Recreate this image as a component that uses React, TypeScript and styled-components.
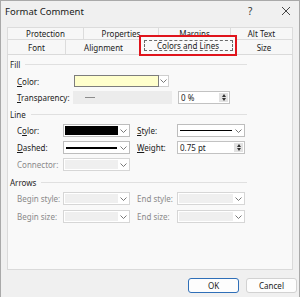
import { FC, ReactNode } from 'react';
import styled, { createGlobalStyle } from 'styled-components';

const GlobalStyle = createGlobalStyle`
  html, body { margin: 0; padding: 0; background: #ffffff; }
  body { font-family: "Noto Sans", "DejaVu Sans", sans-serif; }
`;

const Window = styled.div`
  width: 300px;
  height: 297px;
  box-sizing: border-box;
  background: #f0f0f0;
  border: 1px solid #a9a9a9;
  border-bottom: none;
  display: flex;
  flex-direction: column;
  font-size: 8px;
  color: #1b1b1b;
  overflow: hidden;
`;

const TitleBar = styled.div`
  height: 20px;
  display: flex;
  align-items: center;
  padding-left: 4px;
  font-size: 9.5px;
  color: #1a1a1a;
`;

const Title = styled.span`
  flex: 1;
`;

const Help = styled.span`
  width: 10px;
  margin-right: 23px;
  font-size: 10px;
  color: #333;
`;

const Close = styled.span`
  width: 10px;
  height: 10px;
  margin-right: 8px;
  display: flex;
`;

const Tabs = styled.div`
  margin: 6px 6px 0 6px;
  display: flex;
  flex-direction: column;
`;

const TabRow = styled.div<{ $h: number }>`
  display: flex;
  height: ${p => p.$h}px;
  align-items: stretch;
`;

const Tab = styled.div<{ $w: number }>`
  width: ${p => p.$w}px;
  box-sizing: border-box;
  display: flex;
  align-items: center;
  justify-content: center;
  white-space: nowrap;
  background: #f7f7f7;
  border-top: 1px solid #dcdcdc;
  border-left: 1px solid #dcdcdc;
  &:last-child { border-right: 1px solid #dcdcdc; }
`;

const ActiveTab = styled(Tab)`
  background: #fafafa;
  margin-top: -2px;
  height: 17px;
  position: relative;
  z-index: 1;
  outline: 2px solid #e0141c;
  outline-offset: 0;
  border: none;
`;

const FocusRing = styled.span`
  width: 89px;
  height: 11px;
  box-sizing: border-box;
  border: 1px dashed #6a6a6a;
  display: flex;
  align-items: center;
  justify-content: center;
  white-space: nowrap;
`;

const Panel = styled.div`
  margin: 0 6px;
  height: 216px;
  box-sizing: border-box;
  background: #f9f9f9;
  border: 1px solid #dadada;
  padding: 3px 2px 0 2px;
  display: flex;
  flex-direction: column;
`;

const Heading = styled.div<{ $top: number }>`
  width: 237px;
  height: 12px;
  margin-top: ${p => p.$top}px;
  display: flex;
  align-items: center;
  gap: 5px;
  color: #262626;
  &::after {
    content: '';
    flex: 1;
    border-top: 1px solid #e0e0e0;
  }
`;

const Row = styled.div<{ $top: number; $h: number }>`
  display: flex;
  align-items: center;
  margin-top: ${p => p.$top}px;
  padding-left: 7px;
  height: ${p => p.$h}px;
`;

const Label = styled.span<{ $w: number; $inset?: number; $disabled?: boolean }>`
  width: ${p => p.$w}px;
  padding-left: ${p => p.$inset ?? 0}px;
  box-sizing: content-box;
  flex: none;
  color: ${p => (p.$disabled ? '#8a8a8a' : '#1b1b1b')};
  white-space: nowrap;
`;

const Grid = styled.div<{ $top: number; $gap: number }>`
  display: grid;
  grid-template-columns: 46px 67px 47px 68px;
  grid-auto-rows: 13px;
  row-gap: ${p => p.$gap}px;
  align-items: center;
  margin-top: ${p => p.$top}px;
  padding-left: 7px;
`;

const ComboBox = styled.div<{ $w: number; $disabled?: boolean }>`
  width: ${p => p.$w}px;
  height: 100%;
  box-sizing: border-box;
  display: flex;
  background: #ffffff;
  border: 1px solid ${p => (p.$disabled ? '#d6d6d6' : '#bdbdbd')};
`;

const Preview = styled.div<{ $bg: string }>`
  flex: 1;
  margin: 1px 0 1px 1px;
  background: ${p => p.$bg};
  display: flex;
  align-items: center;
  padding: 0 1px;
`;

const Stroke = styled.div<{ $weight: number }>`
  flex: 1;
  border-top: ${p => p.$weight}px solid #000;
`;

const ArrowBox = styled.div`
  width: 11px;
  flex: none;
  display: flex;
  align-items: center;
  justify-content: center;
`;

const SplitCombo = styled.div<{ $w: number }>`
  width: ${p => p.$w}px;
  height: 100%;
  display: flex;
`;

const Swatch = styled.div<{ $bg: string }>`
  flex: 1;
  background: ${p => p.$bg};
  border: 1px solid #7d7d7d;
`;

const SplitArrow = styled.div`
  width: 10px;
  box-sizing: border-box;
  background: #fff;
  border: 1px solid #cfcfcf;
  border-left: none;
  display: flex;
  align-items: center;
  justify-content: center;
`;

const Slider = styled.div`
  width: 99px;
  height: 13px;
  background: #ececec;
  display: flex;
  align-items: center;
  padding-left: 12px;
  box-sizing: border-box;
  &::before {
    content: '';
    width: 10px;
    border-top: 1px solid #8c8c8c;
  }
`;

const TextBox = styled.div<{ $w: number; $left?: number }>`
  width: ${p => p.$w}px;
  height: 13px;
  margin-left: ${p => p.$left ?? 0}px;
  box-sizing: border-box;
  background: #fff;
  border: 1px solid #c2c2c2;
  display: flex;
  align-items: center;
  padding-left: 2px;
`;

const TextValue = styled.span`
  flex: 1;
`;

const Spin = styled.div`
  width: 9px;
  height: 9px;
  margin-right: 1px;
  background: #e2e2e2;
  display: flex;
  flex-direction: column;
  align-items: center;
  justify-content: space-around;
`;

const Footer = styled.div`
  display: flex;
  justify-content: flex-end;
  gap: 7px;
  padding: 8px 2px 0 0;
`;

const Button = styled.button<{ $primary?: boolean }>`
  width: 51px;
  height: 15px;
  padding: 0;
  font-family: inherit;
  font-size: 8px;
  color: #1b1b1b;
  background: #fdfdfd;
  border: 1px solid ${p => (p.$primary ? '#2f6fb8' : '#d2d2d2')};
  border-radius: 3px;
`;

const Chevron: FC = () => (
  <svg width="7" height="4" viewBox="0 0 7 4">
    <polyline points="0.5,0.5 3.5,3.5 6.5,0.5" fill="none" stroke="#6a6a6a" strokeWidth="0.9" />
  </svg>
);

const Tri: FC<{ up?: boolean }> = ({ up }) => (
  <svg width="4" height="3" viewBox="0 0 4 3">
    <polygon points={up ? '0,3 4,3 2,0' : '0,0 4,0 2,3'} fill="#333" />
  </svg>
);

const Combo: FC<{ w: number; bg?: string; disabled?: boolean; children?: ReactNode }> = ({
  w,
  bg,
  disabled,
  children,
}) => (
  <ComboBox $w={w} $disabled={disabled}>
    <Preview $bg={bg ?? (disabled ? '#efefef' : '#fff')}>{children}</Preview>
    <ArrowBox>
      <Chevron />
    </ArrowBox>
  </ComboBox>
);

const SpinBox: FC<{ w: number; value: string; left?: number }> = ({ w, value, left }) => (
  <TextBox $w={w} $left={left}>
    <TextValue>{value}</TextValue>
    <Spin>
      <Tri up />
      <Tri />
    </Spin>
  </TextBox>
);

const backTabs = [
  { label: 'Protection', w: 76 },
  { label: 'Properties', w: 75 },
  { label: 'Margins', w: 72 },
  { label: 'Alt Text', w: 63 },
];

const App: FC = () => (
  <>
    <GlobalStyle />
    <Window>
      <TitleBar>
        <Title>Format Comment</Title>
        <Help>?</Help>
        <Close>
          <svg width="10" height="10" viewBox="0 0 10 10">
            <path d="M1 1 L9 9 M9 1 L1 9" stroke="#333" strokeWidth="0.9" />
          </svg>
        </Close>
      </TitleBar>

      <Tabs>
        <TabRow $h={12}>
          {backTabs.map(t => (
            <Tab key={t.label} $w={t.w}>
              {t.label}
            </Tab>
          ))}
        </TabRow>
        <TabRow $h={15}>
          <Tab $w={58}>Font</Tab>
          <Tab $w={76}>Alignment</Tab>
          <ActiveTab $w={94}>
            <FocusRing>Colors and Lines</FocusRing>
          </ActiveTab>
          <Tab $w={58}>Size</Tab>
        </TabRow>
      </Tabs>

      <Panel>
        <Heading $top={0}>Fill</Heading>
        <Row $top={5} $h={12}>
          <Label $w={57}>
            <u>C</u>olor:
          </Label>
          <SplitCombo $w={95}>
            <Swatch $bg="#ffffcc" />
            <SplitArrow>
              <Chevron />
            </SplitArrow>
          </SplitCombo>
        </Row>
        <Row $top={4} $h={13}>
          <Label $w={56}>
            <u>T</u>ransparency:
          </Label>
          <Slider />
          <SpinBox w={52} value="0 %" left={6} />
        </Row>

        <Heading $top={4}>Line</Heading>
        <Grid $top={4} $gap={4}>
          <Label $w={46}>
            C<u>o</u>lor:
          </Label>
          <Combo w={67} bg="#000" />
          <Label $w={40} $inset={7}>
            <u>S</u>tyle:
          </Label>
          <Combo w={68}>
            <Stroke $weight={1} />
          </Combo>

          <Label $w={46}>
            <u>D</u>ashed:
          </Label>
          <Combo w={67}>
            <Stroke $weight={2} />
          </Combo>
          <Label $w={40} $inset={7}>
            <u>W</u>eight:
          </Label>
          <SpinBox w={68} value="0.75 pt" />

          <Label $w={46} $disabled>
            Connector:
          </Label>
          <Combo w={67} disabled />
        </Grid>

        <Heading $top={5}>Arrows</Heading>
        <Grid $top={4} $gap={5}>
          <Label $w={46} $disabled>
            Begin style:
          </Label>
          <Combo w={67} disabled />
          <Label $w={40} $inset={7} $disabled>
            End style:
          </Label>
          <Combo w={68} disabled />

          <Label $w={46} $disabled>
            Begin size:
          </Label>
          <Combo w={67} disabled />
          <Label $w={40} $inset={7} $disabled>
            End size:
          </Label>
          <Combo w={68} disabled />
        </Grid>
      </Panel>

      <Footer>
        <Button $primary>OK</Button>
        <Button>Cancel</Button>
      </Footer>
    </Window>
  </>
);

export default App;
